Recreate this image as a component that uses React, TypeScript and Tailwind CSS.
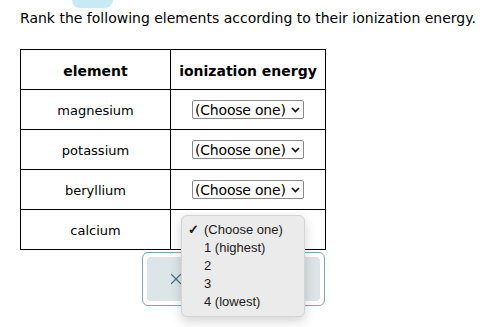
import { X, RotateCcw, HelpCircle } from 'lucide-react'

const rows = ['magnesium', 'potassium', 'beryllium', 'calcium']
const options = ['(Choose one)', '1 (highest)', '2', '3', '4 (lowest)']

function FakeSelect() {
  return (
    <div className="mx-auto flex h-[19px] w-[112px] items-center justify-between rounded-[2px] border border-[#8a8a8a] bg-white pl-[2px] pr-[3px]">
      <span className="whitespace-nowrap text-[14px] leading-none tracking-[-0.2px] text-black">(Choose one)</span>
      <svg width="9" height="6" viewBox="0 0 9 6" className="mt-[1px] shrink-0">
        <path d="M1 1l3.5 3.5L8 1" fill="none" stroke="#111" strokeWidth="1.7" />
      </svg>
    </div>
  )
}

export default function App() {
  return (
    <div className="relative h-[327px] w-[487px] overflow-hidden bg-white font-['DejaVu_Sans',sans-serif] text-black">
      <div className="ml-[72px] h-[8px] w-[41px] rounded-b-lg bg-[#c7eaf3]" />
      <p className="ml-[20px] mt-[2px] text-[14px] leading-[16px]">
        Rank the following elements according to their ionization energy.
      </p>

      <table className="ml-[20px] mt-[23px] border-collapse text-[13px]">
        <thead>
          <tr className="h-[40px]">
            <th className="w-[150px] border border-black pt-[3px] text-[14px] font-bold">element</th>
            <th className="w-[155px] border border-black pt-[3px] text-[14px] font-bold">ionization energy</th>
          </tr>
        </thead>
        <tbody>
          {rows.map((name, i) => (
            <tr key={name} className="h-[40px]">
              <td className="border border-black pt-[2px] text-center">{name}</td>
              <td className="border border-black">{i < 3 ? <FakeSelect /> : null}</td>
            </tr>
          ))}
        </tbody>
      </table>

      <div className="ml-[142px] mt-[2px] h-[54px] w-[183px] rounded-md border border-[#86a3ae] bg-white p-[4px]">
        <div className="grid h-full grid-cols-3 place-items-center rounded-[4px] bg-[#dce5e8] text-[#4a7482]">
          <X size={18} strokeWidth={1.6} />
          <RotateCcw size={16} strokeWidth={1.6} />
          <HelpCircle size={16} strokeWidth={1.6} />
        </div>
      </div>

      <div className="absolute left-[181px] top-[215px] w-[124px] rounded-md border border-[#d4d4d4] bg-[#ebebeb] py-[5px] font-['Liberation_Sans',sans-serif] text-[13px] text-[#1a1a1a] shadow-[0_4px_12px_rgba(0,0,0,0.18)]">
        {options.map((o, i) => (
          <div key={o} className="flex h-[18px] items-center">
            <span className="w-[22px] pl-[6px] text-[13px] font-bold">{i === 0 ? '✓' : ''}</span>
            <span>{o}</span>
          </div>
        ))}
      </div>
    </div>
  )
}
